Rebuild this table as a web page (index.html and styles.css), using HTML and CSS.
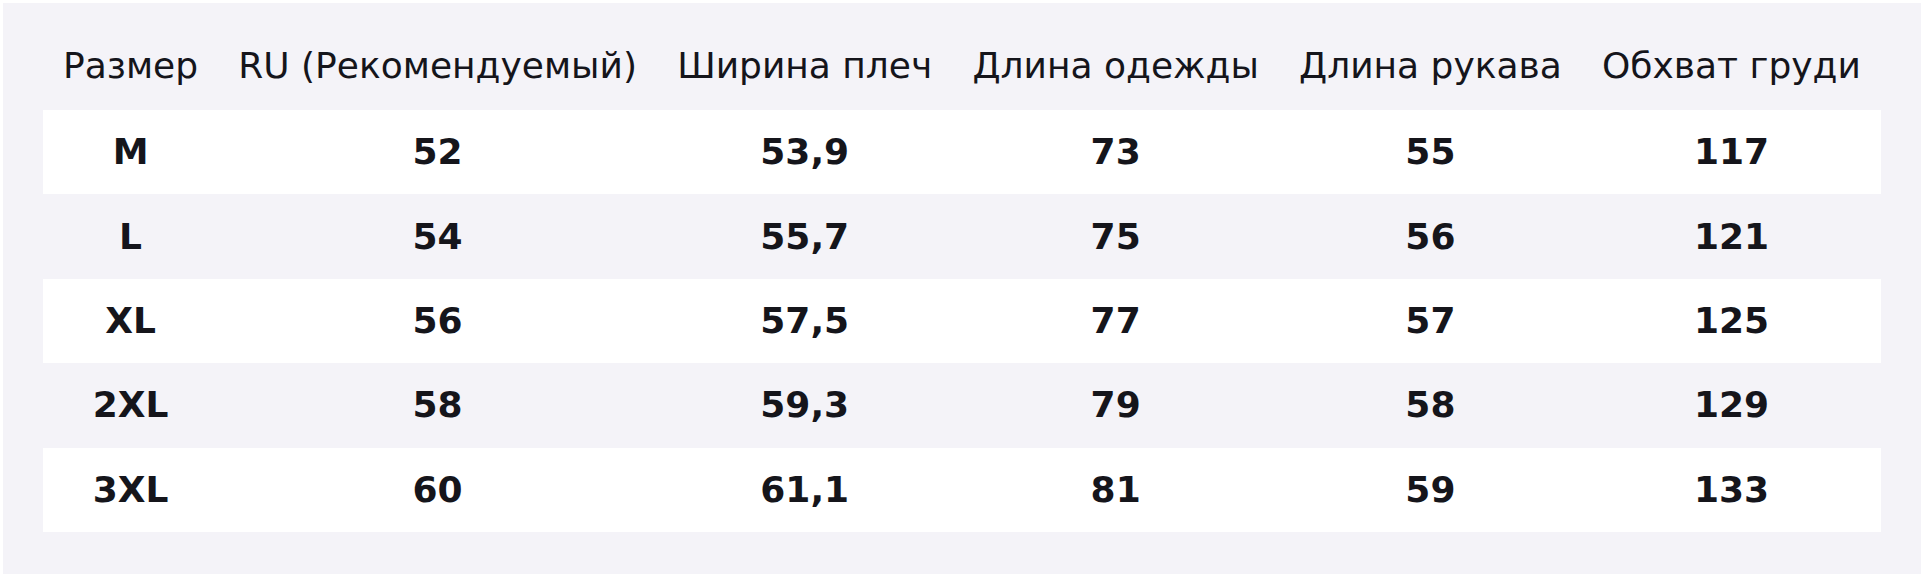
FILE: index.html
```html
<!DOCTYPE html>
<html lang="ru">
<head>
<meta charset="utf-8">
<title>Таблица размеров</title>
<link rel="stylesheet" href="styles.css">
</head>
<body>
<div class="panel">
  <table class="sizes">
    <thead>
      <tr>
        <th>Размер</th>
        <th>RU (Рекомендуемый)</th>
        <th>Ширина плеч</th>
        <th>Длина одежды</th>
        <th>Длина рукава</th>
        <th>Обхват груди</th>
      </tr>
    </thead>
    <tbody>
      <tr class="white"><td>M</td><td>52</td><td>53,9</td><td>73</td><td>55</td><td>117</td></tr>
      <tr><td>L</td><td>54</td><td>55,7</td><td>75</td><td>56</td><td>121</td></tr>
      <tr class="white"><td>XL</td><td>56</td><td>57,5</td><td>77</td><td>57</td><td>125</td></tr>
      <tr><td>2XL</td><td>58</td><td>59,3</td><td>79</td><td>58</td><td>129</td></tr>
      <tr class="white"><td>3XL</td><td>60</td><td>61,1</td><td>81</td><td>59</td><td>133</td></tr>
    </tbody>
  </table>
</div>
</body>
</html>
```
FILE: styles.css
```css
html, body {
  margin: 0;
  padding: 0;
  background: #ffffff;
}
body {
  padding: 3px;
  font-family: "DejaVu Sans", sans-serif;
  color: #15151b;
}
.panel {
  background: #f4f3f8;
  padding: 19px 40px 42px 40px;
}
.sizes {
  width: 100%;
  border-collapse: collapse;
  border-spacing: 0;
}
.sizes th {
  font-weight: normal;
  font-size: 36px;
  line-height: 42px;
  height: 88px;
  padding: 0 20px;
  text-align: center;
  vertical-align: middle;
  white-space: nowrap;
}
.sizes td {
  font-weight: bold;
  font-size: 36px;
  line-height: 42px;
  height: 84.4px;
  padding: 0 20px;
  text-align: center;
  vertical-align: middle;
  box-sizing: border-box;
}
.sizes tr.white td {
  background: #ffffff;
}
```
